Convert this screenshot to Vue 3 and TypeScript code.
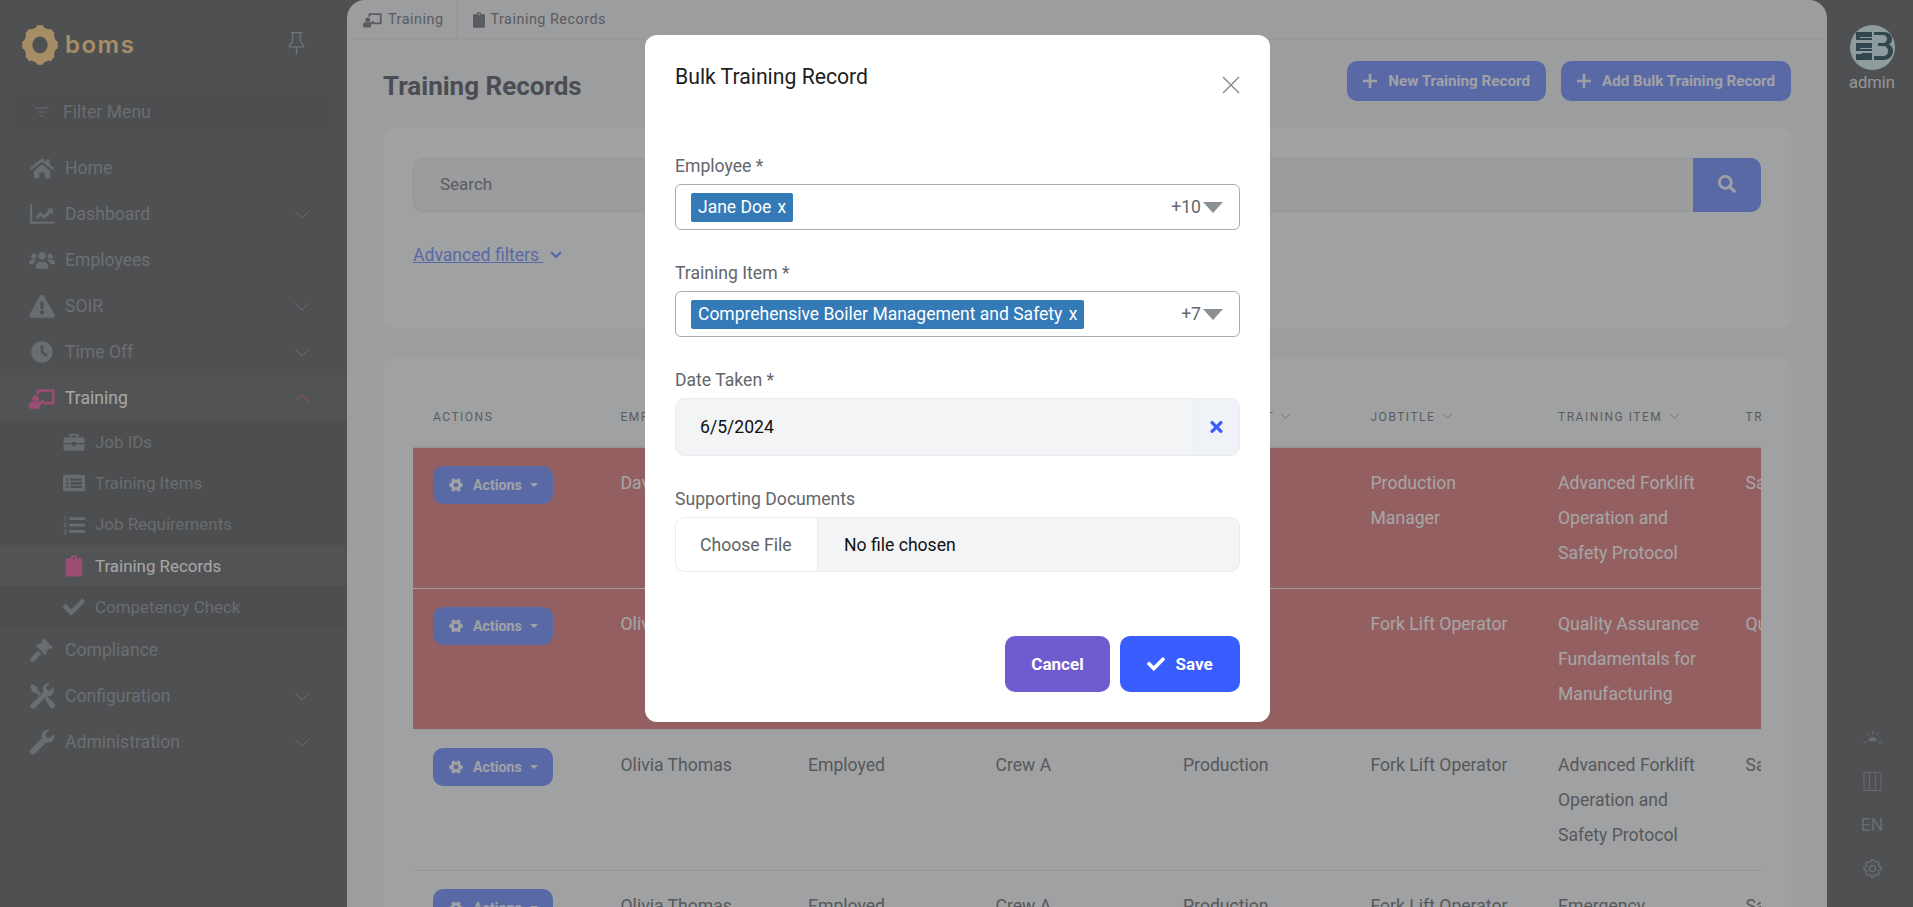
<template>
  <div class="shell">
    <aside class="sidebar">
      <div class="brand">
        <div class="logo">
          <svg class="logo-gear" viewBox="0 0 40 40" preserveAspectRatio="none"><path :d="logoGear" fill-rule="evenodd" /></svg>
          <span class="logo-text">boms</span>
        </div>
        <svg class="pin" viewBox="0 0 18 26" fill="none" stroke="currentColor" stroke-width="1.4">
          <path d="M3 1.5h12M5 1.5v9L1.500 15v1.500h15V15L13 10.500v-9M9 16.500V25" />
        </svg>
      </div>
      <div class="filter">
        <svg viewBox="0 0 14 10" fill="none" stroke="currentColor" stroke-width="1.2">
          <path d="M0 1h14M3 5h8M5.500 9h3" />
        </svg>
        <span>Filter Menu</span>
      </div>
      <nav class="menu">
        <template v-for="item in menu" :key="item.label">
          <div class="menu-row" :class="{ open: item.children }">
            <svg class="menu-icon" viewBox="0 0 24 24"><path :d="icons[item.icon]" fill-rule="evenodd" /></svg>
            <span>{{ item.label }}</span>
            <svg v-if="item.more" class="chev" viewBox="0 0 16 9" fill="none" stroke="currentColor" stroke-width="1">
              <path :d="item.children ? 'M1 8l7-7 7 7' : 'M1 1l7 7 7-7'" />
            </svg>
          </div>
          <div v-if="item.children" class="submenu">
            <div
              v-for="sub in item.children"
              :key="sub.label"
              class="sub-row"
              :class="{ active: sub.active }"
            >
              <svg class="sub-icon" viewBox="0 0 24 24"><path :d="icons[sub.icon]" fill-rule="evenodd" /></svg>
              <span>{{ sub.label }}</span>
            </div>
          </div>
        </template>
      </nav>
    </aside>

    <main class="content">
      <div class="crumbs">
        <div class="crumb">
          <svg viewBox="0 0 24 24"><path :d="icons.teacher" fill-rule="evenodd" /></svg>
          <span>Training</span>
        </div>
        <div class="crumb">
          <svg viewBox="0 0 24 24"><path :d="icons.clipboard" fill-rule="evenodd" /></svg>
          <span>Training Records</span>
        </div>
      </div>

      <div class="page">
        <div class="page-head">
          <h1>Training Records</h1>
          <div class="head-actions">
            <button class="btn-primary">
              <svg viewBox="0 0 14 14" fill="none" stroke="currentColor" stroke-width="2.6"><path d="M7 0v14M0 7h14" /></svg>
              New Training Record
            </button>
            <button class="btn-primary">
              <svg viewBox="0 0 14 14" fill="none" stroke="currentColor" stroke-width="2.6"><path d="M7 0v14M0 7h14" /></svg>
              Add Bulk Training Record
            </button>
          </div>
        </div>

        <section class="card search-card">
          <div class="search">
            <div class="search-input">Search</div>
            <button class="search-btn">
              <svg viewBox="0 0 512 512"><path :d="icons.search" /></svg>
            </button>
          </div>
          <div class="advanced">
            <a>Advanced filters </a>
            <svg viewBox="0 0 12 8" fill="none" stroke="currentColor" stroke-width="2.2"><path d="M1 1l5 5 5-5" /></svg>
          </div>
        </section>

        <section class="card table-card">
          <div class="table-wrap">
            <table>
              <thead>
                <tr>
                  <th v-for="col in columns" :key="col.label">
                    {{ col.label }}
                    <svg v-if="col.sort" viewBox="0 0 16 9" fill="none" stroke="currentColor" stroke-width="1">
                      <path d="M1 1l7 7 7-7" />
                    </svg>
                  </th>
                </tr>
              </thead>
              <tbody>
                <tr v-for="(row, i) in rows" :key="i" :class="{ overdue: row.overdue }">
                  <td>
                    <button class="btn-actions">
                      <svg viewBox="0 0 40 40"><path :d="smallGear" fill-rule="evenodd" /></svg>
                      Actions
                      <i class="caret"></i>
                    </button>
                  </td>
                  <td>{{ row.employee }}</td>
                  <td>{{ row.status }}</td>
                  <td>{{ row.crew }}</td>
                  <td>{{ row.department }}</td>
                  <td>{{ row.jobTitle }}</td>
                  <td>{{ row.item }}</td>
                  <td>{{ row.type }}</td>
                </tr>
              </tbody>
            </table>
          </div>
        </section>
      </div>
    </main>

    <aside class="rail">
      <div class="user">
        <div class="avatar">
          <svg viewBox="0 0 45 45" fill="#4d6c78">
            <path d="M6 7h16v5H10v1h12v2H6zM6 18h16v5H10v1h12v2H6zM6 29h6v-1h10v7H6z" />
            <path d="M24 7h10c5 0 8 3 8 7 0 2.500-1 4-3 5.500 3 1.500 4 3.500 4 6.500 0 5-4 9-9 9H24v-4h9c3 0 5-2 5-5s-2-5-5-5h-5v-3h5c2 0 4-1.500 4-4s-2-4-4-4h-9z" />
          </svg>
        </div>
        <span>admin</span>
      </div>
      <div class="rail-tools">
        <svg viewBox="0 0 20 14" fill="currentColor">
          <path d="M5.500 11a4.500 4.500 0 0 1 9 0zM0 11.500h4v1H0zM16 11.500h4v1h-4zM9.500 0h1v3.500h-1zM3.500 2.700l.7-.7 2.300 2.300-.7.7zM16.500 2.700l-.7-.7-2.300 2.300.7.7z" />
        </svg>
        <svg viewBox="0 0 20 22" fill="none" stroke="currentColor" stroke-width="1">
          <path d="M1 1.500h18v19H1zM7 1.500v19M13 1.500v19" />
        </svg>
        <span>EN</span>
        <svg viewBox="0 0 40 40" fill="none" stroke="currentColor" stroke-width="3">
          <path :d="railGear" />
          <circle cx="20" cy="20" r="6.5" />
        </svg>
      </div>
    </aside>

    <div class="backdrop">
      <div class="modal">
        <div class="modal-head">
          <h3>Bulk Training Record</h3>
          <svg class="modal-close" viewBox="0 0 18 18" fill="none" stroke="currentColor" stroke-width="1.5">
            <path d="M1 1l16 16M17 1L1 17" />
          </svg>
        </div>

        <div class="field">
          <label>Employee *</label>
          <div class="multi">
            <span class="tag">Jane Doe <b>x</b></span>
            <span class="count">+10</span>
            <i class="multi-caret"></i>
          </div>
        </div>

        <div class="field">
          <label>Training Item *</label>
          <div class="multi">
            <span class="tag">Comprehensive Boiler Management and Safety <b>x</b></span>
            <span class="count">+7</span>
            <i class="multi-caret"></i>
          </div>
        </div>

        <div class="field">
          <label>Date Taken *</label>
          <div class="date">
            <span class="date-value">6/5/2024</span>
            <span class="date-clear">
              <svg viewBox="0 0 352 512"><path :d="icons.times" /></svg>
            </span>
          </div>
        </div>

        <div class="field">
          <label>Supporting Documents</label>
          <div class="file">
            <span class="file-btn">Choose File</span>
            <span class="file-name">No file chosen</span>
          </div>
        </div>

        <div class="modal-foot">
          <button class="btn-cancel">Cancel</button>
          <button class="btn-save">
            <svg viewBox="0 0 24 24"><path :d="icons.check" /></svg>
            Save
          </button>
        </div>
      </div>
    </div>
  </div>
</template>

<script setup lang="ts">
interface MenuChild {
  label: string
  icon: string
  active?: boolean
}

interface MenuItem {
  label: string
  icon: string
  more?: boolean
  children?: MenuChild[]
}

interface TrainingRow {
  employee: string
  status: string
  crew: string
  department: string
  jobTitle: string
  item: string
  type: string
  overdue?: boolean
}

// gear outline as one path, the same shape is used in a few sizes
const gearPath = (outer: number, inner: number, hole: number, teeth: number): string => {
  const c = 20
  const step = (Math.PI * 2) / teeth
  const pts: string[] = []
  for (let i = 0; i < teeth; i++) {
    const a = i * step
    const offsets: [number, number][] = [
      [-0.32, inner],
      [-0.2, outer],
      [0.2, outer],
      [0.32, inner],
    ]
    offsets.forEach(([o, r]) => {
      const x = c + r * Math.cos(a + o * step)
      const y = c + r * Math.sin(a + o * step)
      pts.push(`${x.toFixed(2)} ${y.toFixed(2)}`)
    })
  }
  const ring = `M${pts.join('L')}z`
  if (!hole) return ring
  return `${ring}M${c - hole} ${c}a${hole} ${hole} 0 1 0 ${hole * 2} 0a${hole} ${hole} 0 1 0 ${-hole * 2} 0z`
}

const logoGear = gearPath(20, 18, 8.5, 8)
const smallGear = gearPath(20, 15.5, 6.5, 6)
const railGear = gearPath(18, 14.5, 0, 8)

const icons: Record<string, string> = {
  home: 'M12 3L.8 12l1.400 1.800L12 6l9.800 7.800 1.400-1.800L19 8.600V4h-3v2.200zM4.500 14.800L12 8.600l7.500 6.200V21.500h-5V16h-5v5.500h-5z',
  chart: 'M1 3h2V19H23.500v2H1zM6 15l4.500-5 3.500 3 4-4.500L16.500 7H22v5.500L20 10.800l-5.800 6-3.500-3L7.500 17z',
  users:
    'M12 4.500a3.600 3.600 0 1 0 .01 0zM4.500 6a2.500 2.500 0 1 0 .01 0zM19.500 6a2.500 2.500 0 1 0 .01 0zM6.500 20v-2.500c0-2.300 1.700-4 4-4h3c2.300 0 4 1.700 4 4V20zM0 15c0-2 1.200-3.500 3-3.500h3c.5 0 1 .2 1.300.5-1.700 .8-2.700 2.200-3 4H0zM24 15c0-2-1.200-3.500-3-3.500h-3c-.5 0-1 .2-1.300.5 1.700 .8 2.700 2.200 3 4H24z',
  warning:
    'M12 1.500c.8 0 1.400 .4 1.800 1L23.600 19.800c.8 1.400-.2 3-1.800 3H2.200c-1.600 0-2.600-1.600-1.800-3L10.200 2.500c.4-.6 1-1 1.800-1zM10.400 8l.4 7h2.400l.4-7zM12 16a1.900 1.900 0 1 0 .01 0z',
  clock: 'M12 2a10 10 0 1 0 .01 0zM10.800 6h2.400v5.600l4 2.900-1.400 1.900-5-3.600z',
  teacher:
    'M7 4h16.500v14H13v-2.200h8.300V6.200H9.300V8.500H7zM6 9.500a3.200 3.200 0 1 0 .01 0zM1 22c-.6 0-1-.4-1-1v-2.500C0 16.300 1.800 15 4 15h3.500c1 0 1.700 .3 2.500 .5l3-2 1.500 1.800-4.500 3.500V21c0 .6-.4 1-1 1z',
  briefcase:
    'M9 3h6c1.100 0 2 .9 2 2v2h5c.9 0 1.500 .6 1.500 1.500V13H14v-1h-4v1H.5V8.500C.5 7.600 1.100 7 2 7h5V5c0-1.100 .9-2 2-2zM9 5v2h6V5zM.5 14.500H10V16h4v-1.500h9.500V20c0 .9-.6 1.500-1.500 1.500H2c-.9 0-1.500-.6-1.500-1.500z',
  list: 'M2 3h20c1.100 0 2 .9 2 2v14c0 1.100-.9 2-2 2H2c-1.100 0-2-.9-2-2V5c0-1.100 .9-2 2-2zM3.500 7v2.500H6V7zM8 7v2.500h12.500V7zM3.500 11v2.500H6V11zM8 11v2.500h12.500V11zM3.500 15v2.500H6V15zM8 15v2.500h12.500V15z',
  listOl:
    'M7 3.500h17v3H7zM7 10.500h17v3H7zM7 17.500h17v3H7zM1.500 2.500h1.500v5H2V4H1.500zM.8 10h3v1.300l-1.700 1.500h1.700V14h-3v-1.200l1.700-1.600H.8zM.8 17h3v5h-3v-1h2v-1h-1.500v-1h1.500v-1h-2z',
  clipboard:
    'M4.500 3.500h4a3.500 3.500 0 0 1 7 0h4c.9 0 1.500 .6 1.500 1.500v17c0 .9-.6 1.500-1.500 1.500h-15c-.9 0-1.500-.6-1.500-1.500V5c0-.9 .6-1.500 1.500-1.500zM12 2.300a1.300 1.300 0 1 0 .01 0z',
  check:
    'M8.200 20.600L.4 12.800c-.5-.5-.5-1.200 0-1.700l1.700-1.700c.5-.5 1.200-.5 1.700 0L9 14.700 20.200 3.400c.5-.5 1.200-.5 1.700 0l1.700 1.700c.5 .5 .5 1.200 0 1.700L9.900 20.600c-.5 .5-1.200 .5-1.700 0z',
  gavel: 'M13.500 1l8.500 8.500-2 2-1.200-1.200-3 3 1.200 1.200-2 2L6.500 8l2-2 1.200 1.200 3-3L11.500 3zM8.500 12.500l3 3-6.800 6.800c-.8 .8-2.200 .8-3 0s-.8-2.200 0-3z',
  tools:
    'M1 3l2-2 5 3v2.500l4 4-2 2-4-4H3.500zM22.500 3.500L19 7l-2.500-.8-.8-2.500L19.200 .2c-3.500-.8-7.200 2.600-6.500 6.800.1 .6 .2 1 .4 1.500L2 19.500c-1.200 1.200-1.200 2.800 0 4 1.200 .8 2.500 .8 3.500-.2L16 12c4.500 1.500 8.200-3.200 6.500-8.500zM14.500 14l2-2 7 7c.8 1 .8 2.800-.3 3.700-1 1-2.700 1-3.700 0z',
  wrench:
    'M23 4.500L19 8.500l-3-.8-.8-3L19.200 .8C15-.8 10.500 3.500 11.800 8.500L1.500 18.800c-1.200 1.200-1.200 2.800 0 4 1.200 1.200 2.800 1.200 4 0L15.800 12.500c5 1.200 9-3.500 7.200-8z',
  search:
    'M505 442.700L405.300 343c-4.500-4.500-10.600-7-17-7H372c27.600-35.300 44-79.700 44-128C416 93.100 322.900 0 208 0S0 93.100 0 208s93.100 208 208 208c48.300 0 92.700-16.400 128-44v16.300c0 6.400 2.500 12.500 7 17l99.700 99.700c9.400 9.400 24.600 9.400 33.900 0l28.300-28.300c9.400-9.400 9.400-24.600 .1-34zM208 336c-70.700 0-128-57.200-128-128 0-70.700 57.200-128 128-128 70.700 0 128 57.200 128 128 0 70.700-57.200 128-128 128z',
  times:
    'M242.720 256l100.070-100.070c12.280-12.280 12.280-32.190 0-44.480l-22.240-22.240c-12.280-12.280-32.190-12.280-44.480 0L176 189.280 75.930 89.210c-12.280-12.280-32.190-12.280-44.480 0L9.210 111.450c-12.280 12.280-12.280 32.190 0 44.480L109.280 256 9.210 356.070c-12.280 12.280-12.280 32.190 0 44.480l22.240 22.240c12.280 12.280 32.200 12.280 44.480 0L176 322.720l100.070 100.070c12.280 12.280 32.200 12.280 44.480 0l22.240-22.240c12.280-12.280 12.280-32.190 0-44.480L242.720 256z',
}

const menu: MenuItem[] = [
  { label: 'Home', icon: 'home' },
  { label: 'Dashboard', icon: 'chart', more: true },
  { label: 'Employees', icon: 'users' },
  { label: 'SOIR', icon: 'warning', more: true },
  { label: 'Time Off', icon: 'clock', more: true },
  {
    label: 'Training',
    icon: 'teacher',
    more: true,
    children: [
      { label: 'Job IDs', icon: 'briefcase' },
      { label: 'Training Items', icon: 'list' },
      { label: 'Job Requirements', icon: 'listOl' },
      { label: 'Training Records', icon: 'clipboard', active: true },
      { label: 'Competency Check', icon: 'check' },
    ],
  },
  { label: 'Compliance', icon: 'gavel' },
  { label: 'Configuration', icon: 'tools', more: true },
  { label: 'Administration', icon: 'wrench', more: true },
]

const columns = [
  { label: 'Actions', sort: false },
  { label: 'Employee', sort: true },
  { label: 'Status', sort: true },
  { label: 'Crew', sort: true },
  { label: 'Department', sort: true },
  { label: 'Jobtitle', sort: true },
  { label: 'Training Item', sort: true },
  { label: 'Training Type', sort: true },
]

const rows: TrainingRow[] = [
  {
    employee: 'David Wilson',
    status: 'Employed',
    crew: 'Crew A',
    department: 'Production',
    jobTitle: 'Production Manager',
    item: 'Advanced Forklift Operation and Safety Protocol',
    type: 'Safety',
    overdue: true,
  },
  {
    employee: 'Olivia Thomas',
    status: 'Employed',
    crew: 'Crew A',
    department: 'Production',
    jobTitle: 'Fork Lift Operator',
    item: 'Quality Assurance Fundamentals for Manufacturing',
    type: 'Quality',
    overdue: true,
  },
  {
    employee: 'Olivia Thomas',
    status: 'Employed',
    crew: 'Crew A',
    department: 'Production',
    jobTitle: 'Fork Lift Operator',
    item: 'Advanced Forklift Operation and Safety Protocol',
    type: 'Safety',
  },
  {
    employee: 'Olivia Thomas',
    status: 'Employed',
    crew: 'Crew A',
    department: 'Production',
    jobTitle: 'Fork Lift Operator',
    item: 'Emergency Response and Evacuation',
    type: 'Safety',
  },
]
</script>

<style>
html,
body {
  margin: 0;
  height: 100%;
  overflow: hidden;
}
</style>

<style scoped>
* {
  box-sizing: border-box;
}

.shell {
  display: flex;
  height: 907px;
  overflow: hidden;
  background: #797b7e;
  font-family: Roboto, 'Liberation Sans', sans-serif;
  font-size: 17.6px;
  color: #86888c;
}

.sidebar {
  width: 347px;
  flex-shrink: 0;
}

.brand {
  height: 91px;
  padding: 25px 42px 0 22px;
  display: flex;
  justify-content: space-between;
  align-items: flex-start;
}

.logo {
  display: flex;
  align-items: center;
  height: 40px;
  color: #ffd99c;
}

.logo-gear {
  width: 36px;
  height: 40px;
  fill: #ffd99c;
}

.logo-text {
  margin-left: 7px;
  font-family: Inter, sans-serif;
  font-weight: 600;
  font-size: 24px;
  letter-spacing: 1.5px;
  line-height: 40px;
}

.pin {
  width: 17px;
  height: 27px;
  margin-top: 5px;
  color: #abb2bd;
}

.filter {
  height: 42px;
  margin: 0 20px 0 17px;
  padding-left: 17px;
  display: flex;
  align-items: center;
  gap: 14px;
  border-radius: 10px;
  background: #77797c;
  border: 1px solid #737578;
  color: #a1a6ad;
  font-size: 17.6px;
}

.filter svg {
  width: 14px;
  height: 10px;
}

.menu {
  margin-top: 12px;
}

.menu-row {
  height: 46px;
  padding: 0 37px 0 65px;
  position: relative;
  display: flex;
  align-items: center;
  justify-content: space-between;
  color: #a5aab1;
  font-size: 17.6px;
}

.menu-icon {
  position: absolute;
  left: 29px;
  top: 10px;
  width: 26px;
  height: 26px;
  fill: #a1a6ad;
}

.chev {
  width: 16px;
  height: 9px;
  color: #a1a6ad;
}

.menu-row.open {
  background: #7e8083;
  color: #fff;
}

.menu-row.open .menu-icon {
  fill: #f077b2;
}

.menu-row.open .chev {
  color: #ff70aa;
}

.submenu {
  background: #76787b;
}

.sub-row {
  height: 41.3px;
  padding-left: 95px;
  position: relative;
  display: flex;
  align-items: center;
  color: #a1a6ad;
  font-size: 16.9px;
}

.sub-icon {
  position: absolute;
  left: 63px;
  top: 10px;
  width: 22px;
  height: 22px;
  fill: #a1a6ad;
}

.sub-row.active {
  background: #7e8083;
  color: #fff;
}

.sub-row.active .sub-icon {
  fill: #f077b2;
}

.content {
  flex: 1;
  min-width: 0;
  background: #f0f2f5;
  border-radius: 18px 18px 0 0;
  overflow: hidden;
}

.crumbs {
  height: 40px;
  padding-left: 2px;
  display: flex;
  border-bottom: 1px solid #e6e8eb;
  color: #8c8e92;
  font-size: 14.4px;
  letter-spacing: 0.5px;
}

.crumb {
  display: flex;
  align-items: center;
  gap: 6px;
  padding: 0 13px 0 14px;
  border-right: 1px solid #e6e8eb;
}

.crumb:last-child {
  border-right: 0;
  padding-left: 14px;
  gap: 3px;
}

.crumb svg {
  width: 19px;
  height: 19px;
  fill: #8c8e92;
}

.crumb:last-child svg {
  width: 16px;
  height: 16px;
}

.page {
  padding: 21px 36px 0;
}

.page-head {
  height: 40px;
  margin-bottom: 27px;
  display: flex;
  align-items: center;
  justify-content: space-between;
}

h1 {
  margin: 9px 0 0;
  font-size: 26px;
  font-weight: 700;
  color: #73777e;
}

.head-actions {
  display: flex;
  gap: 15px;
}

.btn-primary {
  height: 40px;
  padding: 0 16px;
  display: flex;
  align-items: center;
  gap: 11px;
  border: 0;
  border-radius: 10px;
  background: #87a2fe;
  color: #f5f8ff;
  font-family: inherit;
  font-size: 15.2px;
  font-weight: 700;
}

.btn-primary svg {
  width: 14px;
  height: 14px;
}

.card {
  background: #f6f8fb;
  border-radius: 10px;
}

.search-card {
  height: 200px;
  padding: 30px;
}

.search {
  display: flex;
  height: 54px;
}

.search-input {
  flex: 1;
  padding: 0 0 2px 26px;
  display: flex;
  align-items: center;
  background: #eef0f3;
  border: 1px solid #e4e6e9;
  border-right: 0;
  border-radius: 10px 0 0 10px;
  color: #8c8e92;
  font-size: 17px;
}

.search-btn {
  width: 68px;
  border: 0;
  border-radius: 0 10px 10px 0;
  background: #87a2fe;
}

.search-btn svg {
  width: 18px;
  height: 18px;
  fill: #f5f8ff;
}

.advanced {
  margin-top: 33px;
  display: flex;
  align-items: center;
  gap: 7px;
  color: #87a2fe;
  font-size: 17.6px;
}

.advanced a {
  text-decoration: underline;
  white-space: pre;
}

.advanced svg {
  width: 12px;
  height: 8px;
}

.table-card {
  margin-top: 30px;
  height: 560px;
  padding: 30px;
}

.table-wrap {
  overflow: hidden;
}

table {
  width: 1500px;
  table-layout: fixed;
  border-collapse: collapse;
}

th {
  height: 59px;
  padding: 0 20px;
  width: 187.5px;
  text-align: left;
  font-size: 12px;
  font-weight: 400;
  letter-spacing: 1.5px;
  text-transform: uppercase;
  color: #8c8e92;
  border-bottom: 2px solid #e6e8eb;
  white-space: nowrap;
}

th svg {
  width: 11px;
  height: 6px;
  margin-left: 2px;
  vertical-align: 2px;
}

td {
  height: 141px;
  padding: 18px 20px 17px;
  vertical-align: top;
  font-size: 17.6px;
  line-height: 35px;
  color: #86888c;
  border-bottom: 1px solid #e6e8eb;
}

tr.overdue td {
  background: #e29295;
  color: #fff;
  border-bottom-color: #f3f3f3;
}

.btn-actions {
  width: 120px;
  height: 38px;
  padding: 0 0 0 16px;
  display: flex;
  align-items: center;
  gap: 10px;
  border: 0;
  border-radius: 10px;
  background: #87a2fe;
  color: #f5f8ff;
  font-family: inherit;
  font-size: 14.2px;
  font-weight: 700;
}

.btn-actions svg {
  width: 14px;
  height: 14px;
  fill: #f5f8ff;
}

.caret {
  margin-left: -2px;
  border-top: 4px solid #f5f8ff;
  border-left: 4px solid transparent;
  border-right: 4px solid transparent;
}

.rail {
  width: 86px;
  flex-shrink: 0;
  display: flex;
  flex-direction: column;
  align-items: center;
  justify-content: space-between;
  padding: 25px 0 28px 4px;
  color: #a1a6ad;
}

.user {
  display: flex;
  flex-direction: column;
  align-items: center;
  gap: 3px;
  font-size: 16.5px;
  color: #e4e6e9;
}

.avatar {
  width: 45px;
  height: 45px;
  border-radius: 50%;
  overflow: hidden;
  background: #dcf0f4;
}

.avatar svg {
  display: block;
  width: 45px;
  height: 45px;
}

.rail-tools {
  display: flex;
  flex-direction: column;
  align-items: center;
  gap: 23px;
}

.rail-tools svg {
  width: 19px;
  height: 21px;
}

.backdrop {
  position: fixed;
  inset: 0;
  background: rgba(0, 0, 0, 0.35);
}

.modal {
  position: absolute;
  left: 645px;
  top: 35px;
  width: 625px;
  height: 687px;
  padding: 30px;
  background: #fff;
  border-radius: 12px;
  color: #212529;
}

.modal-head {
  height: 91px;
  display: flex;
  justify-content: space-between;
  align-items: flex-start;
}

h3 {
  margin: 0;
  font-size: 21.2px;
  font-weight: 400;
  line-height: 24px;
  color: #1e1e1e;
}

.modal-close {
  width: 18px;
  height: 18px;
  margin-top: 11px;
  color: #8a8d93;
}

.field {
  margin-bottom: 33px;
}

label {
  display: block;
  margin-bottom: 8px;
  font-size: 17.6px;
  line-height: 20px;
  color: #63666b;
}

.multi {
  height: 46px;
  padding: 0 16px 0 15px;
  display: flex;
  align-items: center;
  border: 1px solid #a9abae;
  border-radius: 6px;
}

.tag {
  height: 29px;
  padding: 0 7px;
  display: flex;
  align-items: center;
  gap: 2px;
  background: #337ab7;
  border-radius: 2px;
  color: #fff;
  font-size: 17.5px;
  white-space: pre;
}

.tag b {
  font-weight: 400;
}

.count {
  margin-left: auto;
  margin-right: 2px;
  color: #64676c;
}

.multi-caret {
  border-top: 11px solid #8c8f93;
  border-left: 10px solid transparent;
  border-right: 10px solid transparent;
}

.date {
  height: 58px;
  display: flex;
  background: #f3f4f6;
  border: 1px solid #e9ebee;
  border-radius: 10px;
  overflow: hidden;
}

.date-value {
  flex: 1;
  padding-left: 24px;
  display: flex;
  align-items: center;
  color: #111;
}

.date-clear {
  width: 46px;
  display: flex;
  align-items: center;
  justify-content: center;
  background: #eff2f7;
  border-left: 1px solid #e9ebee;
}

.date-clear svg {
  width: 13px;
  height: 18px;
  fill: #3a5dff;
}

.file {
  height: 55px;
  display: flex;
  background: #f3f4f6;
  border: 1px solid #e9ebee;
  border-radius: 10px;
  overflow: hidden;
}

.file-btn {
  width: 142px;
  display: flex;
  align-items: center;
  padding-left: 24px;
  background: #fff;
  border-right: 1px solid #e9ebee;
  color: #5e6268;
}

.file-name {
  padding-left: 26px;
  display: flex;
  align-items: center;
  color: #111;
}

.modal-foot {
  position: absolute;
  right: 30px;
  bottom: 30px;
  display: flex;
  gap: 10px;
}

.modal-foot button {
  height: 56px;
  border: 0;
  border-radius: 10px;
  color: #fff;
  font-family: inherit;
  font-size: 17px;
  font-weight: 700;
}

.btn-cancel {
  width: 105px;
  background: #6f5bd0;
}

.btn-save {
  width: 120px;
  display: flex;
  align-items: center;
  justify-content: center;
  gap: 10px;
  background: #3a5dff;
}

.btn-save svg {
  width: 18px;
  height: 18px;
  fill: #fff;
}
</style>
